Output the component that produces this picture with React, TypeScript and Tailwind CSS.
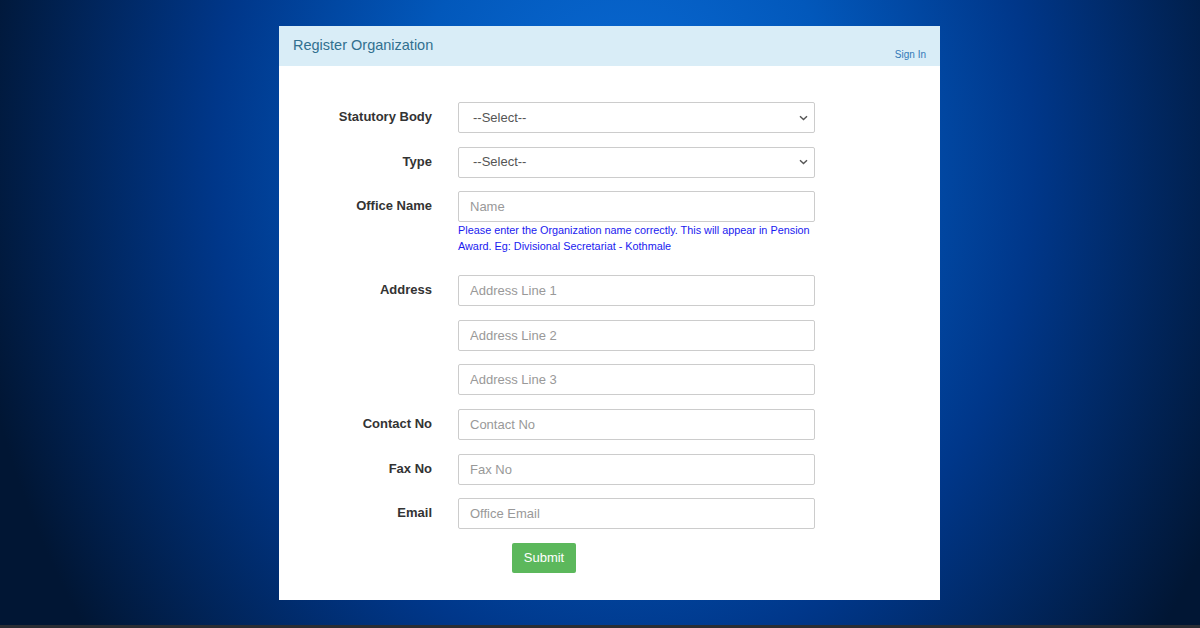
import React from "react";

const font = { fontFamily: '"Liberation Sans", Arial, sans-serif' };

function Chevron() {
  return (
    <svg width="9" height="6" viewBox="0 0 9 6" className="absolute right-[6px] top-1/2 -translate-y-1/2 pointer-events-none">
      <path d="M1 1.2 L4.5 4.6 L8 1.2" fill="none" stroke="#555" strokeWidth="1.4" />
    </svg>
  );
}

function Label({ text }: { text: string }) {
  return (
    <div className="w-[153px] h-[31px] flex items-center justify-end text-[13px] font-bold text-[#333] shrink-0 pb-[1px]">
      {text}
    </div>
  );
}

function SelectBox() {
  return (
    <div className="relative w-[357px] h-[31px] border border-[#ccc] rounded-[2px] bg-white flex items-center pl-[14px] text-[13px] text-[#555]">
      --Select--
      <Chevron />
    </div>
  );
}

function TextBox({ ph }: { ph: string }) {
  return (
    <input
      placeholder={ph}
      className="w-[357px] h-[31px] border border-[#ccc] rounded-[2px] bg-white px-[11px] text-[13px] text-[#555] placeholder:text-[#999] outline-none"
      style={font}
    />
  );
}

function Row({ label, children, mb = "mb-[13.6px]" }: { label: string; children: React.ReactNode; mb?: string }) {
  return (
    <div className={`flex items-start gap-[26px] ${mb}`}>
      <Label text={label} />
      <div className="flex flex-col">{children}</div>
    </div>
  );
}

export default function App() {
  return (
    <div
      className="w-[1200px] h-[628px] overflow-hidden relative"
      style={{
        ...font,
        background:
          "radial-gradient(ellipse 55% 130% at 52% 25%, #0b6dd8 0%, #0258bb 33%, #00378a 62%, #011634 100%)",
      }}
    >
      <div className="pt-[26px] pl-[279px]">
        <div className="w-[661px] h-[574px] bg-white flex flex-col">
          <div className="h-[40px] bg-[#d9edf7] flex justify-between px-[14px]">
            <div className="text-[14.5px] text-[#31708f] pt-[9px]">Register Organization</div>
            <div className="text-[10px] text-[#337ab7] pt-[21px]">Sign In</div>
          </div>
          <div className="pt-[36px]">
            <Row label="Statutory Body">
              <SelectBox />
            </Row>
            <Row label="Type">
              <SelectBox />
            </Row>
            <Row label="Office Name" mb="mb-[21px]">
              <TextBox ph="Name" />
              <div className="w-[360px] text-[10.85px] leading-[16px] text-[#1a1af0] pt-[0px]">
                Please enter the Organization name correctly. This will appear in Pension Award. Eg: Divisional Secretariat - Kothmale
              </div>
            </Row>
            <Row label="Address">
              <div className="flex flex-col gap-[13.6px]">
                <TextBox ph="Address Line 1" />
                <TextBox ph="Address Line 2" />
                <TextBox ph="Address Line 3" />
              </div>
            </Row>
            <Row label="Contact No">
              <TextBox ph="Contact No" />
            </Row>
            <Row label="Fax No">
              <TextBox ph="Fax No" />
            </Row>
            <Row label="Email" mb="mb-[14px]">
              <TextBox ph="Office Email" />
            </Row>
            <div className="pl-[233px]">
              <button className="w-[64px] h-[30px] bg-[#5cb85c] text-white text-[13px] rounded-[2px]" style={font}>
                Submit
              </button>
            </div>
          </div>
        </div>
      </div>
      <div className="absolute bottom-0 left-0 w-full h-[3px] bg-[#2a2d33]" />
    </div>
  );
}
